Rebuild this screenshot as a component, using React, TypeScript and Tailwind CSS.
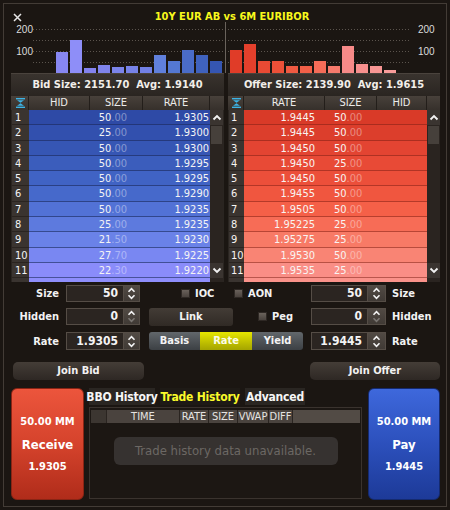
import React from "react";

const font = "font-['DejaVu_Sans_Condensed','DejaVu_Sans',sans-serif]";

const bidRows: [string, string][] = [
  ["50", "1.9305"], ["25", "1.9300"], ["50", "1.9300"], ["50", "1.9295"], ["50", "1.9295"], ["50", "1.9290"],
  ["50", "1.9235"], ["25", "1.9235"], ["21.5", "1.9230"], ["27.7", "1.9225"], ["22.3", "1.9220"],
];
const bidColors = [
  "#2e4aa6", "#3250ae", "#3656b4", "#3b5dbc", "#4063c4", "#4669cb",
  "#5272d6", "#5d7ade", "#6a82e8", "#7987f2", "#8a8cfa", "#8e8efc",
];
const offerRows: [string, string][] = [
  ["1.9445", "50"], ["1.9445", "50"], ["1.9450", "50"], ["1.9450", "25"], ["1.9450", "50"], ["1.9455", "50"],
  ["1.9505", "50"], ["1.95225", "25"], ["1.95275", "25"], ["1.9530", "50"], ["1.9535", "25"],
];
const offerColors = [
  "#d93a28", "#dc3e2c", "#e34432", "#e84a36", "#ec4f3a", "#f0563f",
  "#f56048", "#f76c56", "#f87a66", "#f98474", "#fa8e86", "#fa928a",
];

const leftBars = [
  [56, 52, "#8787f2"], [70, 40, "#8e8ef8"], [84, 68, "#8383ef"], [98, 65, "#7f84ec"], [112, 67, "#7b84ea"],
  [126, 66, "#7783e8"], [140, 67, "#7281e6"], [154, 55, "#6080dc"], [168, 61, "#5478d2"], [182, 50, "#4a6cc8"],
  [196, 55, "#3f62be"], [210, 61, "#3556b2"],
] as const;
const rightBars = [
  [230, 50, "#e03c28"], [244, 44, "#e4402c"], [258, 61, "#e84a34"], [272, 61, "#ec5038"], [286, 66, "#f05a42"],
  [300, 66, "#f26048"], [314, 61, "#f46c58"], [328, 66, "#f67a6c"], [342, 46, "#f78a88"], [356, 64, "#f8908e"],
  [370, 66, "#f89694"], [384, 70, "#f99c9a"],
] as const;

function Size({ v }: { v: string }) {
  const [a, b] = v.includes(".") ? v.split(".") : [v, "0"];
  return (
    <>
      {a}
      <span className="text-white/40">.{b.padEnd(2, "0")}</span>
    </>
  );
}

function HeadIcon() {
  return (
    <svg width="9" height="10" viewBox="0 0 9 10">
      <rect x="0" y="0" width="9" height="1.4" fill="#3cb4e6" />
      <polygon points="1,2.2 8,2.2 4.5,4.7" fill="#3cb4e6" />
      <polygon points="1,7.8 8,7.8 4.5,5.3" fill="#3cb4e6" />
      <rect x="0" y="8.6" width="9" height="1.4" fill="#3cb4e6" />
    </svg>
  );
}

function Chevron({ up, className = "" }: { up?: boolean; className?: string }) {
  return (
    <svg width="10" height="7" viewBox="0 0 10 7" className={className}>
      <polyline
        points={up ? "1.5,5.5 5,2 8.5,5.5" : "1.5,1.5 5,5 8.5,1.5"}
        fill="none"
        stroke="#f2f2f2"
        strokeWidth="1.9"
      />
    </svg>
  );
}

function Scrollbar() {
  return (
    <div className="w-[13px] flex flex-col bg-[#2a2420]">
      <div className="h-[15px] flex items-center justify-center bg-[#3a3430]">
        <Chevron up />
      </div>
      <div className="h-[18px] bg-[#46403b] mx-[1px] mt-[1px]" />
      <div className="flex-1" />
      <div className="h-[15px] mb-[4px] flex items-center justify-center bg-[#3a3430]">
        <Chevron />
      </div>
    </div>
  );
}

function BidPanel() {
  return (
    <div className="w-[213px] flex flex-col bg-[#2a2521] border-t border-[#4a433d]">
      <div className="h-[22px] flex items-center justify-center bg-gradient-to-b from-[#39332e] to-[#2a2521] text-[11px] font-bold text-[#f2eee9]">
        Bid Size: 2151.70&nbsp;&nbsp;Avg: 1.9140
      </div>
      <div className="h-[14px] flex pl-[1px] bg-gradient-to-b from-[#48413b] to-[#36302b] text-[11px] text-[#ecebea] leading-[14px]">
        <div className="w-[17px] flex items-center justify-center border-r border-[#231e1a]">
          <HeadIcon />
        </div>
        <div className="w-[61px] text-center border-r border-[#231e1a]">HID</div>
        <div className="w-[53px] text-center border-r border-[#231e1a]">SIZE</div>
        <div className="w-[67px] text-center border-r border-[#231e1a]">RATE</div>
        <div className="w-[13px]" />
      </div>
      <div className="h-[172px] flex pl-[1px] overflow-hidden">
        <div className="w-[198px] flex flex-col">
          {bidRows.map(([s, r], i) => (
            <div key={i} className="h-[15.3px] shrink-0 flex text-[11px] leading-[15px] text-[#f4f4f4]">
              <div className="w-[17px] pl-[3px] bg-[#3a3430] border-b border-[#2a2420]">{i + 1}</div>
              <div className="flex flex-1 border-b border-[#1c2a5a]/60" style={{ backgroundColor: bidColors[i] }}>
                <div className="w-[61px]" />
                <div className="w-[53px] text-right pr-[16px]">
                  <Size v={s} />
                </div>
                <div className="w-[67px] text-right pr-[1px]">{r}</div>
              </div>
            </div>
          ))}
          <div className="h-[15px] shrink-0 flex">
            <div className="w-[17px] bg-[#3a3430]" />
            <div className="flex-1" style={{ backgroundColor: bidColors[11] }} />
          </div>
        </div>
        <Scrollbar />
      </div>
    </div>
  );
}

function OfferPanel() {
  return (
    <div className="w-[212px] flex flex-col bg-[#2a2521] border-t border-[#4a433d]">
      <div className="h-[22px] flex items-center justify-center bg-gradient-to-b from-[#39332e] to-[#2a2521] text-[11px] font-bold text-[#f2eee9]">
        Offer Size: 2139.90&nbsp;&nbsp;Avg: 1.9615
      </div>
      <div className="h-[14px] flex pl-[1px] bg-gradient-to-b from-[#48413b] to-[#36302b] text-[11px] text-[#ecebea] leading-[14px]">
        <div className="w-[15px] flex items-center justify-center border-r border-[#231e1a]">
          <HeadIcon />
        </div>
        <div className="w-[81px] text-center border-r border-[#231e1a]">RATE</div>
        <div className="w-[52px] text-center border-r border-[#231e1a]">SIZE</div>
        <div className="w-[50px] text-center border-r border-[#231e1a]">HID</div>
        <div className="w-[13px]" />
      </div>
      <div className="h-[172px] flex pl-[1px] overflow-hidden">
        <div className="w-[198px] flex flex-col">
          {offerRows.map(([r, s], i) => (
            <div key={i} className="h-[15.3px] shrink-0 flex text-[11px] leading-[15px] text-[#f8f4f2]">
              <div className="w-[15px] pl-[2px] bg-[#3a3430] border-b border-[#2a2420]">{i + 1}</div>
              <div className="flex flex-1 border-b border-[#7a1e14]/50" style={{ backgroundColor: offerColors[i] }}>
                <div className="w-[81px] text-right pr-[10px]">{r}</div>
                <div className="w-[52px] pl-[9px]">
                  <Size v={s} />
                </div>
                <div className="w-[50px]" />
              </div>
            </div>
          ))}
          <div className="h-[15px] shrink-0 flex">
            <div className="w-[15px] bg-[#3a3430]" />
            <div className="flex-1" style={{ backgroundColor: offerColors[11] }} />
          </div>
        </div>
        <Scrollbar />
      </div>
    </div>
  );
}

function Spin({ dim, w }: { dim?: boolean; w: string }) {
  return (
    <div className={`${w} h-full flex flex-col items-center justify-center gap-[1px] bg-gradient-to-b from-[#514a44] to-[#403a35] border border-l-0 border-[#554d46]`}>
      <Chevron up className="w-[9px] h-[6px]" />
      <Chevron className={`w-[9px] h-[6px] ${dim ? "opacity-30" : ""}`} />
    </div>
  );
}

function Field({ value, w }: { value: string; w: string }) {
  return (
    <div className={`${w} h-full flex items-center justify-end pr-[5px] bg-[#2b2521] border border-[#554d46] text-[12px] leading-[15px] font-bold text-[#f4f4f4]`}>
      {value}
    </div>
  );
}

function Check({ label, w = "" }: { label: string; w?: string }) {
  return (
    <div className={`flex items-center gap-[5px] ${w}`}>
      <div className="w-[9px] h-[9px] bg-gradient-to-b from-[#6a625b] to-[#4a433e] border border-[#2e2824]" />
      <span className="text-[11px] leading-[15px] font-bold text-[#f2f2f2]">{label}</span>
    </div>
  );
}

function LeftInput({ label, value, dim }: { label: string; value: string; dim?: boolean }) {
  return (
    <div className="w-[138px] h-full flex items-center">
      <div className="w-[48px] text-right text-[11px] leading-[15px] font-bold text-[#f2f2f2]">{label}</div>
      <div className="ml-[7px] h-full flex">
        <Field value={value} w="w-[58px]" />
        <Spin w="w-[16px]" dim={dim} />
      </div>
    </div>
  );
}

function RightInput({ label, value, dim }: { label: string; value: string; dim?: boolean }) {
  return (
    <div className="ml-[8px] h-full flex items-center">
      <div className="h-full flex">
        <Field value={value} w="w-[57px]" />
        <Spin w="w-[18px]" dim={dim} />
      </div>
      <div className="ml-[6px] text-[11px] leading-[15px] font-bold text-[#f2f2f2]">{label}</div>
    </div>
  );
}

export default function App() {
  return (
    <div className={`w-[450px] h-[510px] bg-[#1b1612] p-[3px] ${font}`}>
      <div className="h-full border border-[#433c36] flex flex-col">
        {/* title */}
        <div className="mt-[4px] h-[18px] flex items-center pr-[4px]">
          <svg width="9" height="9" viewBox="0 0 9 9" className="ml-[9px]">
            <path d="M1 1 L8 8 M8 1 L1 8" stroke="#e6e6e6" strokeWidth="1.5" />
          </svg>
          <div className="flex-1 text-center text-[11px] font-bold text-[#f8f81c]">10Y EUR AB vs 6M EURIBOR</div>
        </div>
        {/* depth chart */}
        <svg width="442" height="47" viewBox="4 26 442 47" className="block overflow-visible">
          {[29, 40, 51, 62].map((y) => (
            <g key={y}>
              <line x1="33" y1={y + 0.5} x2="224" y2={y + 0.5} stroke="#5b544d" strokeDasharray="1 2" />
              <line x1="228" y1={y + 0.5} x2="409" y2={y + 0.5} stroke="#5b544d" strokeDasharray="1 2" />
            </g>
          ))}
          <line x1="225.5" y1="22" x2="225.5" y2="73" stroke="#6a635c" />
          <text x="33" y="33" textAnchor="end" fontSize="10" fill="#dcdcdc" fontFamily="Liberation Sans, sans-serif">200</text>
          <text x="33" y="55" textAnchor="end" fontSize="10" fill="#dcdcdc" fontFamily="Liberation Sans, sans-serif">100</text>
          <text x="418" y="33" fontSize="10" fill="#dcdcdc" fontFamily="Liberation Sans, sans-serif">200</text>
          <text x="418" y="55" fontSize="10" fill="#dcdcdc" fontFamily="Liberation Sans, sans-serif">100</text>
          {leftBars.map(([x, t, c]) => (
            <rect key={x} x={x} y={t} width="12" height={73 - t} fill={c} />
          ))}
          {rightBars.map(([x, t, c]) => (
            <rect key={x} x={x} y={t} width="12" height={73 - t} fill={c} />
          ))}
        </svg>
        {/* books */}
        <div className="flex pl-[7px] gap-[4px]">
          <BidPanel />
          <OfferPanel />
        </div>
        {/* controls */}
        <div className="mt-[3px] h-[17px] flex pl-[7px]">
          <LeftInput label="Size" value="50" />
          <div className="w-[154px] flex items-center pl-[32px]">
            <Check label="IOC" w="w-[53px]" />
            <Check label="AON" />
          </div>
          <RightInput label="Size" value="50" />
        </div>
        <div className="mt-[6px] h-[17px] flex pl-[7px]">
          <LeftInput label="Hidden" value="0" dim />
          <div className="w-[154px] flex items-center">
            <button className="w-[84px] h-[18px] rounded-[3px] bg-gradient-to-b from-[#433c36] to-[#302a25] text-[11px] leading-[16px] font-bold text-[#f2f2f2]">
              Link
            </button>
            <div className="ml-[25px]">
              <Check label="Peg" />
            </div>
          </div>
          <RightInput label="Hidden" value="0" dim />
        </div>
        <div className="mt-[7px] h-[18px] flex pl-[7px]">
          <LeftInput label="Rate" value="1.9305" />
          <div className="w-[154px] h-full flex rounded-[3px] overflow-hidden text-[11px] leading-[16px] font-bold text-[#f4f4f4]">
            <div className="w-[51px] flex items-center justify-center bg-gradient-to-b from-[#62676b] to-[#3c4044]">Basis</div>
            <div className="w-[52px] flex items-center justify-center bg-gradient-to-b from-[#e6e600] to-[#a4a400] text-[#fbfbe8]">Rate</div>
            <div className="w-[51px] flex items-center justify-center bg-gradient-to-b from-[#62676b] to-[#3c4044]">Yield</div>
          </div>
          <RightInput label="Rate" value="1.9445" />
        </div>
        <div className="mt-[12px] h-[18px] flex pl-[9px]">
          <button className="w-[131px] h-full rounded-[5px] bg-gradient-to-b from-[#443d37] to-[#2e2824] text-[11px] leading-[16px] font-bold text-[#f2f2f2]">
            Join Bid
          </button>
          <button className="ml-[166px] w-[130px] h-full rounded-[5px] bg-gradient-to-b from-[#443d37] to-[#2e2824] text-[11px] leading-[16px] font-bold text-[#f2f2f2]">
            Join Offer
          </button>
        </div>
        {/* bottom */}
        <div className="mt-[8px] h-[112px] flex pl-[7px]">
          <button className="w-[73px] h-full rounded-[6px] border border-[#8a2414] bg-gradient-to-b from-[#ec553c] via-[#d5432c] to-[#b02c1a] flex flex-col items-center justify-center text-white font-bold">
            <span className="text-[11px] leading-[14px]">50.00 MM</span>
            <span className="text-[13px] leading-[16px] mt-[8px]">Receive</span>
            <span className="text-[11px] leading-[14px] mt-[7px]">1.9305</span>
          </button>
          <div className="ml-[5px] w-[273px] flex flex-col">
            <div className="h-[17px] flex gap-[5px] text-[12px] leading-[16px] font-bold whitespace-nowrap tracking-[-0.2px]">
              <div className="w-[66px] flex items-center justify-center bg-[#2a2622] text-[#f6f6f6]">BBO History</div>
              <div className="w-[80px] flex items-center justify-center bg-[#1e1a16] text-[#fafa2a]">Trade History</div>
              <div className="w-[60px] flex items-center justify-center bg-[#2a2622] text-[#f6f6f6]">Advanced</div>
            </div>
            <div className="mt-[2px] h-[92px] border border-[#3a332e] bg-[#1c1713] pt-[2px] px-[1px] flex flex-col">
              <div className="h-[13px] flex text-[11px] leading-[13px] text-[#e6e4e2]">
                <div className="w-[16px] bg-[#3c3631] border-r border-[#2a2420]" />
                <div className="w-[73px] text-center bg-[#4a433e] border-r border-[#2a2420]">TIME</div>
                <div className="w-[29px] text-center bg-[#4a433e] border-r border-[#2a2420]">RATE</div>
                <div className="w-[29px] text-center bg-[#4a433e] border-r border-[#2a2420]">SIZE</div>
                <div className="w-[31px] text-center bg-[#4a433e] border-r border-[#2a2420]">VWAP</div>
                <div className="w-[24px] text-center bg-[#4a433e] border-r border-[#2a2420]">DIFF</div>
                <div className="flex-1 bg-[#524b45]" />
              </div>
              <div className="mt-[14px] mx-auto w-[224px] h-[28px] rounded-[6px] bg-[#363230] flex items-center justify-center text-[13px] text-[#6c6864]">
                Trade history data unavailable.
              </div>
            </div>
          </div>
          <button className="ml-[6px] w-[72px] h-full rounded-[6px] border border-[#142a70] bg-gradient-to-b from-[#3e68dc] via-[#2c50bc] to-[#1d3a98] flex flex-col items-center justify-center text-white font-bold">
            <span className="text-[11px] leading-[14px]">50.00 MM</span>
            <span className="text-[13px] leading-[16px] mt-[8px]">Pay</span>
            <span className="text-[11px] leading-[14px] mt-[7px]">1.9445</span>
          </button>
        </div>
      </div>
    </div>
  );
}
